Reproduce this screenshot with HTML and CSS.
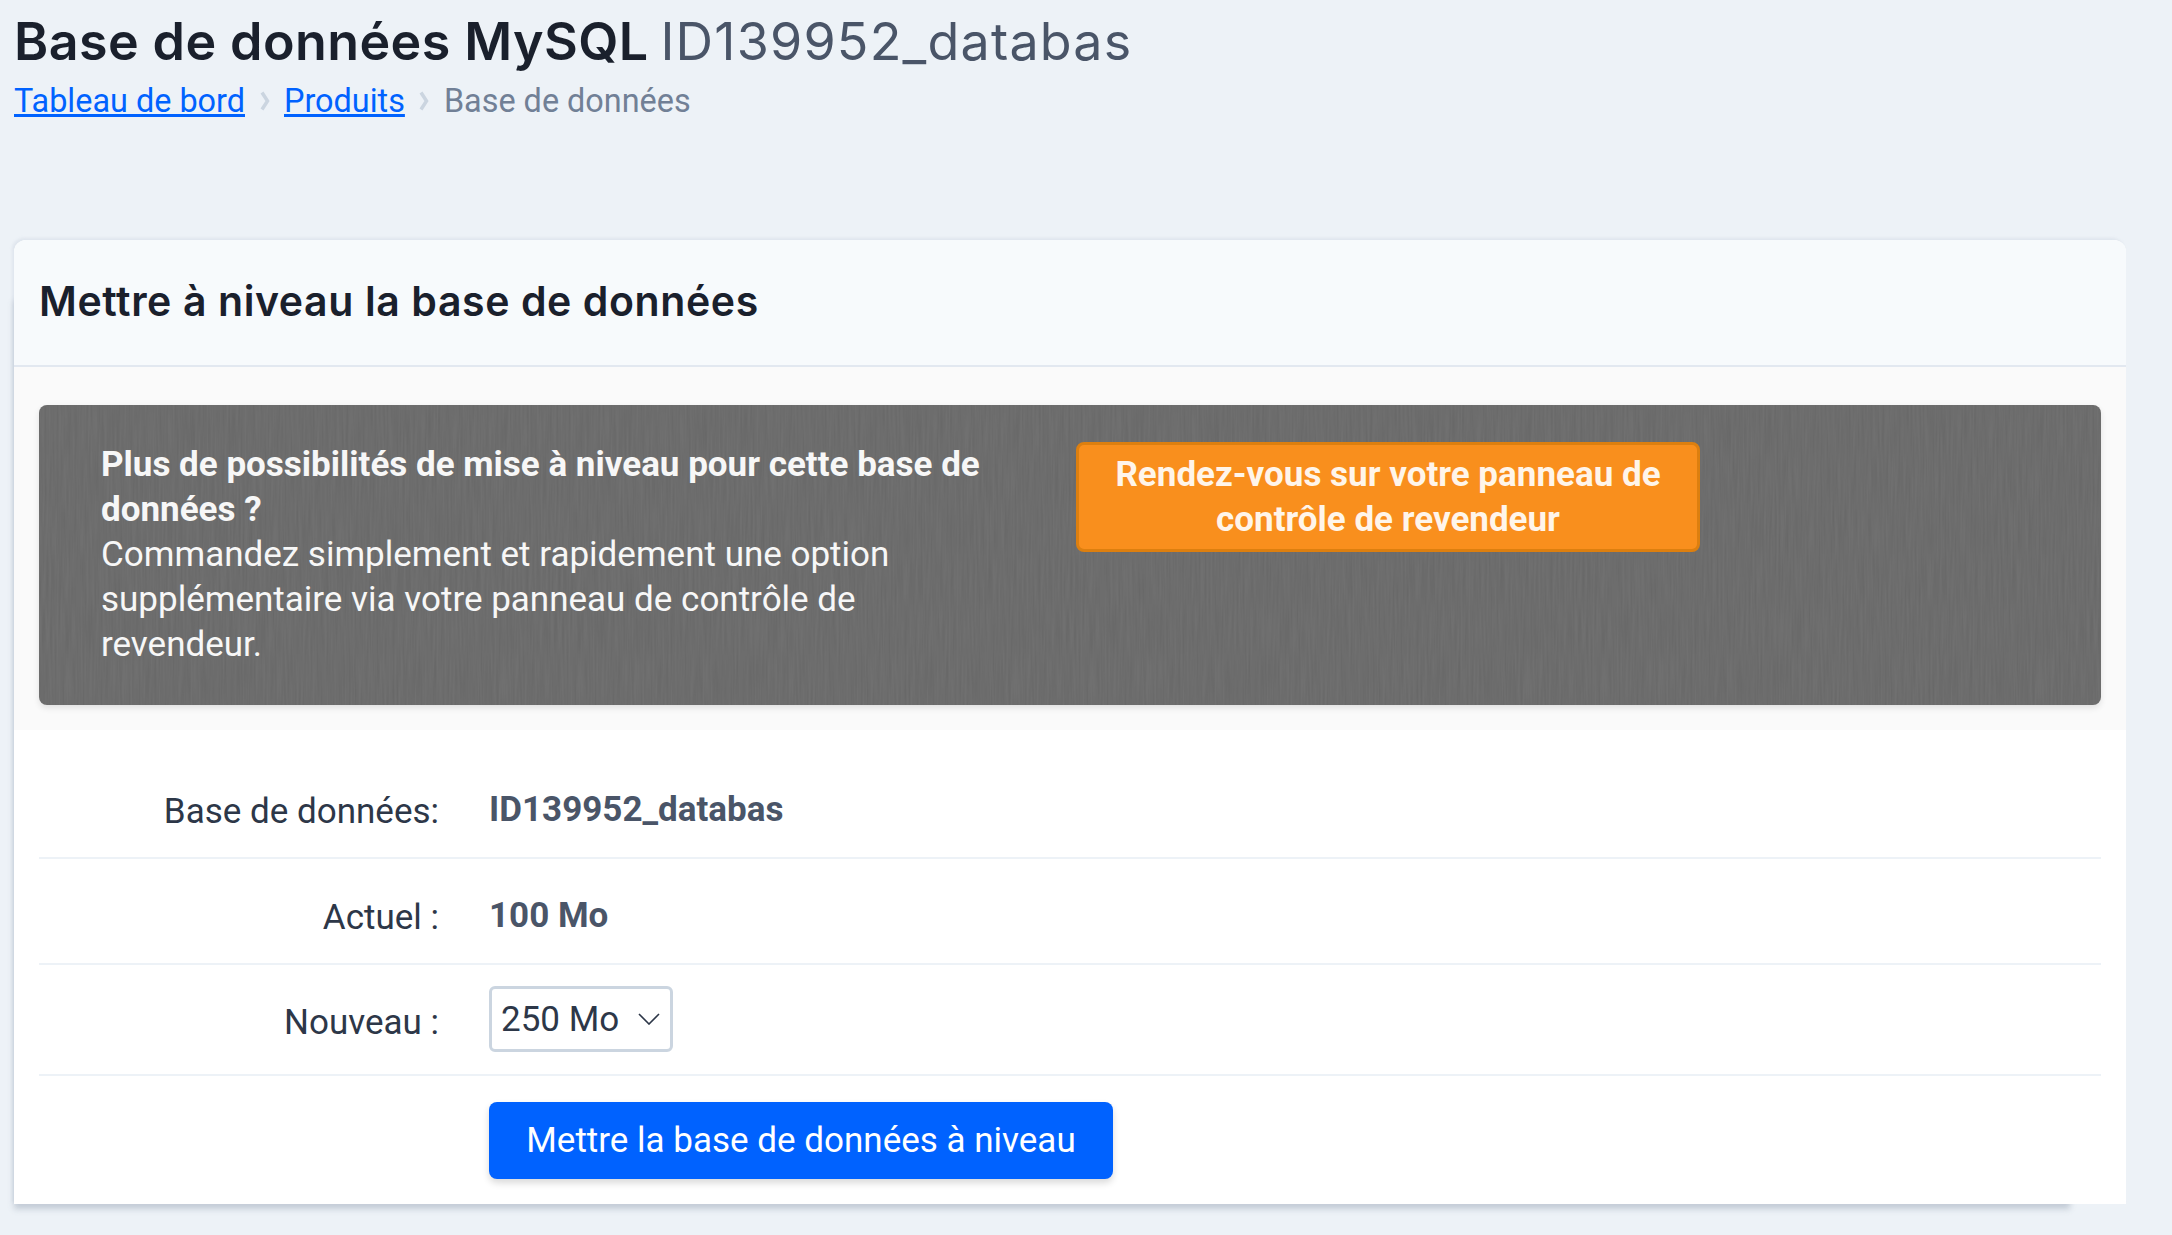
FILE: index.html
```html
<!DOCTYPE html>
<html lang="fr">
<head>
<meta charset="utf-8">
<title>Mettre à niveau la base de données</title>
<link rel="stylesheet" href="styles.css">
</head>
<body>
<header class="page-head">
  <h1 class="title"><strong>Base de données MySQL</strong> <span class="title-id">ID139952_databas</span></h1>
  <nav class="crumbs">
    <a href="#">Tableau de bord</a>
    <svg class="sep" width="10" height="22" viewBox="0 0 10 22"><path d="M2 2.5l5.5 8.5-5.5 8.5" fill="none" stroke="#cbd5e0" stroke-width="3.5"/></svg>
    <a href="#">Produits</a>
    <svg class="sep" width="10" height="22" viewBox="0 0 10 22"><path d="M2 2.5l5.5 8.5-5.5 8.5" fill="none" stroke="#cbd5e0" stroke-width="3.5"/></svg>
    <span class="crumb-current">Base de données</span>
  </nav>
</header>
<main class="card">
  <div class="card-head"><h2>Mettre à niveau la base de données</h2></div>
  <section class="notice-wrap">
    <div class="notice">
      <svg class="grain" width="100%" height="100%" aria-hidden="true">
        <filter id="grain"><feTurbulence type="fractalNoise" baseFrequency="0.5 0.02" numOctaves="2" seed="4"/><feColorMatrix values="0 0 0 0 0  0 0 0 0 0  0 0 0 0 0  0.12 0 0 0 -0.03"/></filter>
        <rect width="100%" height="100%" filter="url(#grain)"/>
      </svg>
      <p class="notice-text"><strong>Plus de possibilités de mise à niveau pour cette base de données ?</strong><br>Commandez simplement et rapidement une option supplémentaire via votre panneau de contrôle de revendeur.</p>
      <a class="btn-orange" href="#">Rendez-vous sur votre panneau de contrôle de revendeur</a>
    </div>
  </section>
  <form class="form">
    <div class="row row-db"><span class="label">Base de données:</span><strong class="value">ID139952_databas</strong></div>
    <div class="row row-cur"><span class="label">Actuel :</span><strong class="value">100 Mo</strong></div>
    <div class="row row-new"><span class="label">Nouveau :</span>
      <div class="select"><span>250 Mo</span><svg width="22" height="12" viewBox="0 0 22 12"><path d="M1 1l10 10L21 1" fill="none" stroke="#2d3748" stroke-width="1.6"/></svg></div>
    </div>
    <div class="row-submit"><button type="button" class="btn-primary">Mettre la base de données à niveau</button></div>
  </form>
</main>
</body>
</html>
```
FILE: styles.css
```css
* { box-sizing: border-box; }
html, body { margin: 0; height: 100%; overflow: hidden; }
body {
  background: #edf2f7;
  padding: 0 46px 0 14px;
  font-family: Roboto, sans-serif;
  font-size: 35px;
  line-height: 45px;
  color: #2d3748;
}
.page-head { height: 240px; }
.title {
  margin: 0;
  padding-top: 10px;
  font-family: Inter, sans-serif;
  font-size: 52px;
  line-height: 64px;
  font-weight: 400;
  letter-spacing: 1.2px;
  word-spacing: -4px;
  color: #4a5568;
}
.title strong { font-weight: 600; color: #1a202c; letter-spacing: .4px; word-spacing: 0; }
.crumbs { display: flex; align-items: center; gap: 14.5px; height: 48px; margin-top: 3px; font-size: 32.4px; color: #718096; }
.crumbs a { color: #0062ff; }
.card {
  background: #fff;
  border-radius: 12px 12px 0 0;
  height: 964px;
  box-shadow: -28px 33px 6px -28px rgba(100,116,139,.3), -2px -2px 3px rgba(160,174,192,.18);
}
.card-head {
  height: 127px;
  padding: 0 25px 2px;
  display: flex;
  align-items: center;
  background: #f7fafc;
  border-bottom: 2px solid #e2e8f0;
  border-radius: 12px 12px 0 0;
}
.card-head h2 {
  margin: 0;
  font-family: Inter, sans-serif;
  font-size: 41px;
  font-weight: 600;
  letter-spacing: .6px;
  color: #1a202c;
}
.notice-wrap { background: #fafafa; padding: 38px 25px 25px; }
.notice {
  position: relative;
  display: flex;
  align-items: flex-start;
  height: 300px;
  padding: 37px 62px;
  background: #707070;
  border-radius: 8px;
  box-shadow: 0 3px 6px rgba(0,0,0,.1);
  color: #f7f7f7;
  overflow: hidden;
}
.grain { position: absolute; inset: 0; }
.notice-text { position: relative; width: 936px; margin: 0; padding-right: 36px; }
.btn-orange {
  position: relative;
  flex: none;
  width: 624px;
  margin-left: 39px;
  padding: 0 30px;
  height: 110px;
  display: flex;
  align-items: center;
  text-align: center;
  background: #f98f1d;
  border: 3px solid #dd7f0f;
  border-radius: 8px;
  color: #fff5ea;
  font-weight: 700;
  text-decoration: none;
}
.form { padding: 0 25px; }
.row {
  display: grid;
  grid-template-columns: 400px 1fr;
  column-gap: 50px;
  border-bottom: 2px solid #edf2f7;
}
.row-db { height: 129px; padding-top: 57px; }
.row-db .label { margin-top: 2px; }
.row-db .value { margin-top: 2px; }
.row-cur { height: 106px; padding-top: 36px; }
.row-new { height: 111px; padding-top: 22px; }
.row-new .label { margin-top: 13px; }
.label { text-align: right; color: #2d3748; }
.value { color: #4a5568; font-weight: 700; line-height: 42px; }
.select {
  width: 184px;
  height: 66px;
  display: flex;
  align-items: center;
  justify-content: space-between;
  padding: 0 10px 0 9px;
  border: 3px solid #cbd5e0;
  border-radius: 6px;
  background: #fff;
  margin-top: -1px;
}
.row-submit { padding: 26px 0 0 450px; }
.btn-primary {
  width: 624px;
  height: 77px;
  border: 0;
  border-radius: 8px;
  background: #0062ff;
  color: #fff;
  font: 400 35px Roboto, sans-serif;
  box-shadow: 0 4px 7px rgba(0,0,0,.15);
}
```
